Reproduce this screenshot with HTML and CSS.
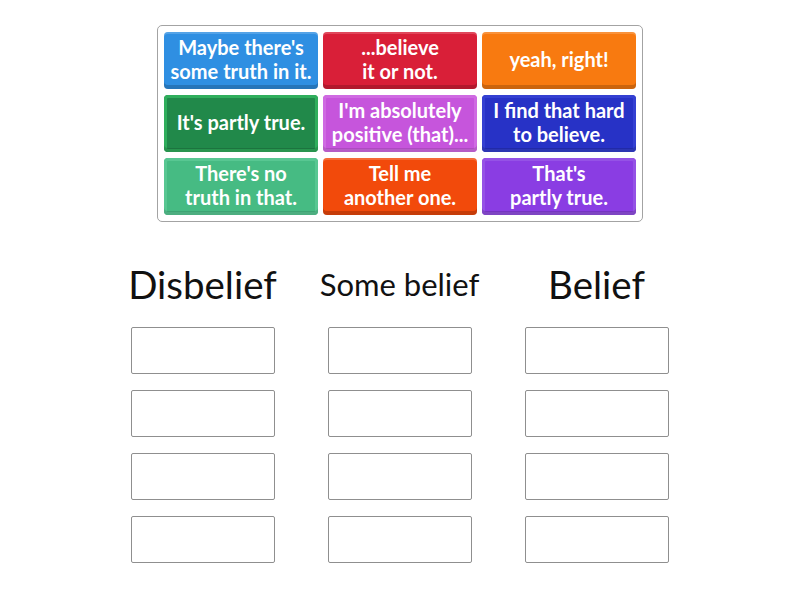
FILE: index.html
```html
<!doctype html>
<html>
<head>
    <title>Group sort</title>
    <link rel="stylesheet" href="styles.css">
</head>
<body>
<!-- tiles waiting to be sorted -->
<div class="tray">
    <div class="tile tile-sky">Maybe there's<br>some truth in it.</div>
    <div class="tile tile-red">...believe<br>it or not.</div>
    <div class="tile tile-orange">yeah, right!</div>
    <div class="tile tile-green">It's partly true.</div>
    <div class="tile tile-violet">I'm absolutely<br>positive (that)...</div>
    <div class="tile tile-navy">I find that hard<br>to believe.</div>
    <div class="tile tile-mint">There's no<br>truth in that.</div>
    <div class="tile tile-fire">Tell me<br>another one.</div>
    <div class="tile tile-purple">That's<br>partly true.</div>
</div>

<!-- group columns with empty slots -->
<div class="groups">
    <div class="group">
        <div class="group-title">Disbelief</div>
        <div class="slot"></div>
        <div class="slot"></div>
        <div class="slot"></div>
        <div class="slot"></div>
    </div>
    <div class="group">
        <div class="group-title group-title-small">Some belief</div>
        <div class="slot"></div>
        <div class="slot"></div>
        <div class="slot"></div>
        <div class="slot"></div>
    </div>
    <div class="group">
        <div class="group-title">Belief</div>
        <div class="slot"></div>
        <div class="slot"></div>
        <div class="slot"></div>
        <div class="slot"></div>
    </div>
</div>
</body>
</html>
```

FILE: styles.css
```css
* { margin: 0; padding: 0; box-sizing: border-box; }
body { background-color: #fff; font-family: Lato, 'Open Sans', Arial, sans-serif; padding-top: 25px; }

.tray { width: 486px; margin: 0 auto; padding: 6px; border: 1px solid #a3a3a3; border-radius: 5px;
    display: grid; grid-template-columns: repeat(3, 154px); column-gap: 5px; row-gap: 6px; }

.tile { height: 57px; border-radius: 4px; display: flex; align-items: center; justify-content: center;
    text-align: center; color: #fff; font-weight: bold; font-size: 20px; line-height: 24px; padding: 0 2px 4px;
    white-space: nowrap;
    box-shadow: inset 0 -4px 0 rgba(0,0,0,0.18), inset 0 2px 0 rgba(255,255,255,0.18); }

.tile-sky { background-color: #2f8fe2; }
.tile-red { background-color: #d91f38; }
.tile-orange { background-color: #f87a10; }
.tile-green { background-color: #21894a; box-shadow: inset 0 -4px 0 rgba(0,0,0,0.15), inset 0 0 0 3px #2fae5c; }
.tile-violet { background-color: #c655dc; box-shadow: inset 0 -4px 0 rgba(0,0,0,0.12), inset 0 0 0 3px #cf6ae2; }
.tile-navy { background-color: #2732c6; box-shadow: inset 0 -4px 0 rgba(0,0,0,0.15), inset 0 0 0 3px #3440d2; }
.tile-mint { background-color: #46bb83; box-shadow: inset 0 -4px 0 rgba(0,0,0,0.12), inset 0 0 0 3px #58c792; }
.tile-fire { background-color: #f24a0b; }
.tile-purple { background-color: #8a3de3; box-shadow: inset 0 -4px 0 rgba(0,0,0,0.15), inset 0 0 0 3px #9552e6; }

.groups { display: grid; grid-template-columns: repeat(3, 144px); column-gap: 53px; justify-content: center;
    margin-top: 42px; margin-left: -1px; }

.group { display: flex; flex-direction: column; gap: 16px; }
.group-title { height: 47px; display: flex; justify-content: center; align-items: center; white-space: nowrap;
    font-size: 38.5px; color: #111; padding-bottom: 7px; }
.group-title-small { font-size: 31px; }

.slot { height: 47px; border: 1px solid #8f8f8f; border-radius: 2px; background-color: #fff; }
```
